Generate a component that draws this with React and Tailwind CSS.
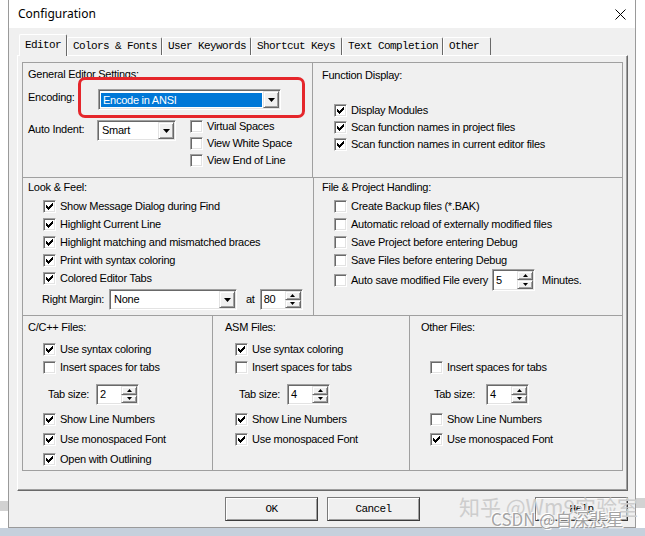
import React from 'react'

// classic 7x7 pixel check mark, one 1x3 column per x
const CHECK_COLS = [[0, 2], [1, 3], [2, 4], [3, 3], [4, 2], [5, 1], [6, 0]]

const SUNKEN =
  'bg-white border border-t-[#a0a0a0] border-l-[#a0a0a0] border-r-white border-b-white shadow-[inset_1px_1px_0_#696969,inset_-1px_-1px_0_#e3e3e3]'
const RAISED =
  'bg-[#f0f0f0] border border-t-[#e3e3e3] border-l-[#e3e3e3] border-r-[#696969] border-b-[#696969] shadow-[inset_1px_1px_0_#ffffff,inset_-1px_-1px_0_#a0a0a0]'

function Check({ checked }) {
  return (
    <span className={`relative block w-[13px] h-[13px] shrink-0 ${SUNKEN}`}>
      {checked && (
        <svg className="absolute left-[2px] top-[2px]" width="7" height="7" viewBox="0 0 7 7">
          {CHECK_COLS.map(([x, y]) => (
            <rect key={x} x={x} y={y} width="1" height="3" fill="#000" />
          ))}
        </svg>
      )}
    </span>
  )
}

function CB({ checked, children, h = 'h-[18px]' }) {
  return (
    <div className={`${h} flex items-center gap-[4px] whitespace-nowrap`}>
      <Check checked={checked} />
      <span>{children}</span>
    </div>
  )
}

function DropBtn() {
  return (
    <div className={`w-[16px] h-full shrink-0 flex items-center justify-center ${RAISED}`}>
      <svg width="7" height="4" viewBox="0 0 7 4">
        <polygon points="0,0 7,0 3.5,4" fill="#000" />
      </svg>
    </div>
  )
}

function Combo({ w, value, selected }) {
  return (
    <div className={`${w} h-[21px] shrink-0 flex p-px ${SUNKEN}`}>
      <div className="flex-1 min-w-0 flex items-center px-px">
        {selected ? (
          <div className="w-full h-[14px] leading-[14px] bg-[#0078d7] text-white pl-[2px] whitespace-nowrap">{value}</div>
        ) : (
          <span className="pl-[2px] whitespace-nowrap">{value}</span>
        )}
      </div>
      <DropBtn />
    </div>
  )
}

function SpinBtn({ up }) {
  return (
    <div className={`flex-1 flex items-center justify-center ${RAISED}`}>
      <svg width="5" height="3" viewBox="0 0 5 3">
        <polygon points={up ? '0,3 5,3 2.5,0' : '0,0 5,0 2.5,3'} fill="#000" />
      </svg>
    </div>
  )
}

function Spin({ value, h = 'h-[21px]' }) {
  return (
    <div className={`w-[43px] ${h} shrink-0 flex p-px ${SUNKEN}`}>
      <div className="flex-1 flex items-center pl-[2px]">{value}</div>
      <div className="w-[16px] flex flex-col">
        <SpinBtn up />
        <SpinBtn />
      </div>
    </div>
  )
}

const TABS = [
  { label: 'Editor', w: 'w-[48px]', active: true },
  { label: 'Colors & Fonts', w: 'w-[95px]' },
  { label: 'User Keywords', w: 'w-[89px]' },
  { label: 'Shortcut Keys', w: 'w-[91px]' },
  { label: 'Text Completion', w: 'w-[101px]' },
  { label: 'Other', w: 'w-[48px]' },
]

const MONO = "font-['Liberation_Mono','Courier_New',monospace] text-[11px] tracking-[-0.6px]"

function Button({ children }) {
  return (
    <div
      className={`w-[93px] h-[24px] flex items-center justify-center bg-[#f0f0f0] border border-[#7a7a7a] border-r-[#3c3c3c] border-b-[#3c3c3c] shadow-[inset_1px_1px_0_#ffffff,inset_-1px_-1px_0_#a0a0a0] ${MONO}`}
    >
      {children}
    </div>
  )
}

export default function App() {
  return (
    <div className="relative w-[645px] h-[536px] overflow-hidden bg-white flex flex-col font-['Liberation_Sans',Arial,sans-serif] text-[11px] tracking-[-0.25px] text-black">
      <div className="flex h-[528px]">
        {/* strip left of the dialog */}
        <div className="w-[8px] flex flex-col">
          <div className="mt-[501px] h-[10px] bg-[#d2d2d2]" />
        </div>

        {/* dialog window */}
        <div className="w-[628px] h-[528px] flex flex-col bg-[#f0f0f0] border-x border-b border-[#9a9a9a]">
          <div className="h-[28px] bg-white flex items-center justify-between pl-[9px] pr-[9px]">
            <span className="font-['Noto_Sans',sans-serif] text-[12px] tracking-normal">Configuration</span>
            <svg width="11" height="11" viewBox="0 0 11 11">
              <path d="M0.5 0.5 L10.5 10.5 M10.5 0.5 L0.5 10.5" stroke="#000" strokeWidth="1" />
            </svg>
          </div>

          <div className="flex flex-col pl-[10px] pt-[6px]">
            {/* tabs */}
            <div className="flex items-end h-[21px]">
              {TABS.map(t => (
                <div
                  key={t.label}
                  className={`${t.w} ${t.active ? 'h-[22px] -mb-px relative z-10 bg-[#f0f0f0]' : 'h-[18px]'} flex items-center pl-[5px] whitespace-nowrap border-t border-l border-t-white border-l-white border-r border-r-[#696969] rounded-t-[2px] ${MONO}`}
                >
                  {t.label}
                </div>
              ))}
            </div>

            {/* property page */}
            <div className="-ml-[2px] w-[611px] h-[436px] pl-[4px] pt-[6px] border border-t-white border-l-white border-r-[#696969] border-b-[#696969] shadow-[inset_-1px_-1px_0_#a0a0a0]">
              <div className="w-[601px] p-px flex flex-col gap-px bg-[#a0a0a0]">
                {/* row 1 */}
                <div className="flex gap-px h-[114px]">
                  <div className="w-[289px] bg-[#f0f0f0] pl-[5px] pt-[5px]">
                    <div className="h-[13px] leading-[13px]">General Editor Settings:</div>
                    <div className="mt-[8px] flex h-[21px] items-center">
                      <span className="w-[70px] -mt-[4px]">Encoding:</span>
                      <Combo w="w-[183px]" value="Encode in ANSI" selected />
                    </div>
                    <div className="mt-[10px] flex items-start">
                      <span className="w-[69px] h-[19px] flex items-center">Auto Indent:</span>
                      <Combo w="w-[79px]" value="Smart" />
                      <div className="ml-[14px] -mt-[2px] flex flex-col">
                        <CB h="h-[17px]">Virtual Spaces</CB>
                        <CB h="h-[17px]">View White Space</CB>
                        <CB h="h-[17px]">View End of Line</CB>
                      </div>
                    </div>
                  </div>
                  <div className="flex-1 bg-[#f0f0f0] pl-[9px] pt-[6px]">
                    <div className="h-[13px] leading-[13px]">Function Display:</div>
                    <div className="mt-[20px] ml-[12px] flex flex-col">
                      <CB checked h="h-[17px]">Display Modules</CB>
                      <CB checked h="h-[17px]">Scan function names in project files</CB>
                      <CB checked h="h-[17px]">Scan function names in current editor files</CB>
                    </div>
                  </div>
                </div>

                {/* row 2 */}
                <div className="flex gap-px h-[137px]">
                  <div className="w-[290px] bg-[#f0f0f0] pl-[5px] pt-[3px]">
                    <div className="h-[13px] leading-[13px]">Look &amp; Feel:</div>
                    <div className="mt-[3px] ml-[15px] flex flex-col">
                      <CB checked>Show Message Dialog during Find</CB>
                      <CB checked>Highlight Current Line</CB>
                      <CB checked>Highlight matching and mismatched braces</CB>
                      <CB checked>Print with syntax coloring</CB>
                      <CB checked>Colored Editor Tabs</CB>
                    </div>
                    <div className="mt-[2px] ml-[14px] flex items-center h-[21px]">
                      <span className="w-[67px]">Right Margin:</span>
                      <Combo w="w-[128px]" value="None" />
                      <span className="ml-[9px]">at</span>
                      <div className="ml-[5px]">
                        <Spin value="80" />
                      </div>
                    </div>
                  </div>
                  <div className="flex-1 bg-[#f0f0f0] pl-[8px] pt-[3px]">
                    <div className="h-[13px] leading-[13px]">File &amp; Project Handling:</div>
                    <div className="mt-[3px] ml-[12px] flex flex-col">
                      <CB>Create Backup files (*.BAK)</CB>
                      <CB>Automatic reload of externally modified files</CB>
                      <CB>Save Project before entering Debug</CB>
                      <CB>Save Files before entering Debug</CB>
                      <div className="h-[22px] flex items-center whitespace-nowrap">
                        <Check />
                        <span className="ml-[4px]">Auto save modified File every</span>
                        <div className="ml-[4px]">
                          <Spin value="5" h="h-[22px]" />
                        </div>
                        <span className="ml-[7px]">Minutes.</span>
                      </div>
                    </div>
                  </div>
                </div>

                {/* row 3 */}
                <div className="flex gap-px h-[154px]">
                  <div className="w-[189px] bg-[#f0f0f0] pl-[5px] pt-[5px]">
                    <div className="h-[13px] leading-[13px]">C/C++ Files:</div>
                    <div className="mt-[6px] ml-[15px] flex flex-col">
                      <CB checked>Use syntax coloring</CB>
                      <CB>Insert spaces for tabs</CB>
                    </div>
                    <div className="mt-[8px] ml-[20px] flex items-center h-[21px]">
                      <span className="w-[48px]">Tab size:</span>
                      <Spin value="2" />
                    </div>
                    <div className="mt-[4px] ml-[15px] flex flex-col">
                      <CB checked h="h-[20px]">Show Line Numbers</CB>
                      <CB checked h="h-[20px]">Use monospaced Font</CB>
                      <CB checked h="h-[20px]">Open with Outlining</CB>
                    </div>
                  </div>
                  <div className="w-[196px] bg-[#f0f0f0] pl-[12px] pt-[5px]">
                    <div className="h-[13px] leading-[13px]">ASM Files:</div>
                    <div className="mt-[6px] ml-[10px] flex flex-col">
                      <CB checked>Use syntax coloring</CB>
                      <CB>Insert spaces for tabs</CB>
                    </div>
                    <div className="mt-[8px] ml-[14px] flex items-center h-[21px]">
                      <span className="w-[48px]">Tab size:</span>
                      <Spin value="4" />
                    </div>
                    <div className="mt-[4px] ml-[10px] flex flex-col">
                      <CB checked h="h-[20px]">Show Line Numbers</CB>
                      <CB checked h="h-[20px]">Use monospaced Font</CB>
                    </div>
                  </div>
                  <div className="flex-1 bg-[#f0f0f0] pl-[11px] pt-[5px]">
                    <div className="h-[13px] leading-[13px]">Other Files:</div>
                    <div className="mt-[6px] ml-[9px] flex flex-col">
                      <div className="h-[18px]" />
                      <CB>Insert spaces for tabs</CB>
                    </div>
                    <div className="mt-[8px] ml-[13px] flex items-center h-[21px]">
                      <span className="w-[52px]">Tab size:</span>
                      <Spin value="4" />
                    </div>
                    <div className="mt-[4px] ml-[9px] flex flex-col">
                      <CB h="h-[20px]">Show Line Numbers</CB>
                      <CB checked h="h-[20px]">Use monospaced Font</CB>
                    </div>
                  </div>
                </div>
              </div>
            </div>

            {/* dialog buttons */}
            <div className="mt-[6px] flex">
              <div className="ml-[206px]">
                <Button>OK</Button>
              </div>
              <div className="ml-[9px]">
                <Button>Cancel</Button>
              </div>
              <div className="ml-[115px]">
                <Button>Help</Button>
              </div>
            </div>
          </div>
        </div>

        {/* strip right of the dialog */}
        <div className="w-[9px] flex flex-col">
          <div className="mt-[498px] h-[10px] bg-[#d2d2d2]" />
        </div>
      </div>
      <div className="h-[8px] bg-[#c6d0dc]" />

      {/* red annotation frame */}
      <div className="absolute left-[78px] top-[77px] w-[227px] h-[41px] border-[3px] border-[#e5262b] rounded-[7px]" />

      {/* watermarks */}
      <div className="absolute left-[459px] top-[493px] pointer-events-none font-['Noto_Sans_CJK_SC',sans-serif] tracking-normal whitespace-nowrap">
        <div className="text-[21px] leading-[26px] text-[#cdcdcd]">知乎 @Wm9实验室</div>
        <div className="-mt-[11px] ml-[32px] text-[17px] leading-[22px] text-[#a4a4a4] [text-shadow:1px_1px_0_#fff,-1px_-1px_0_#fff]">
          CSDN @自深悲星
        </div>
      </div>
    </div>
  )
}
